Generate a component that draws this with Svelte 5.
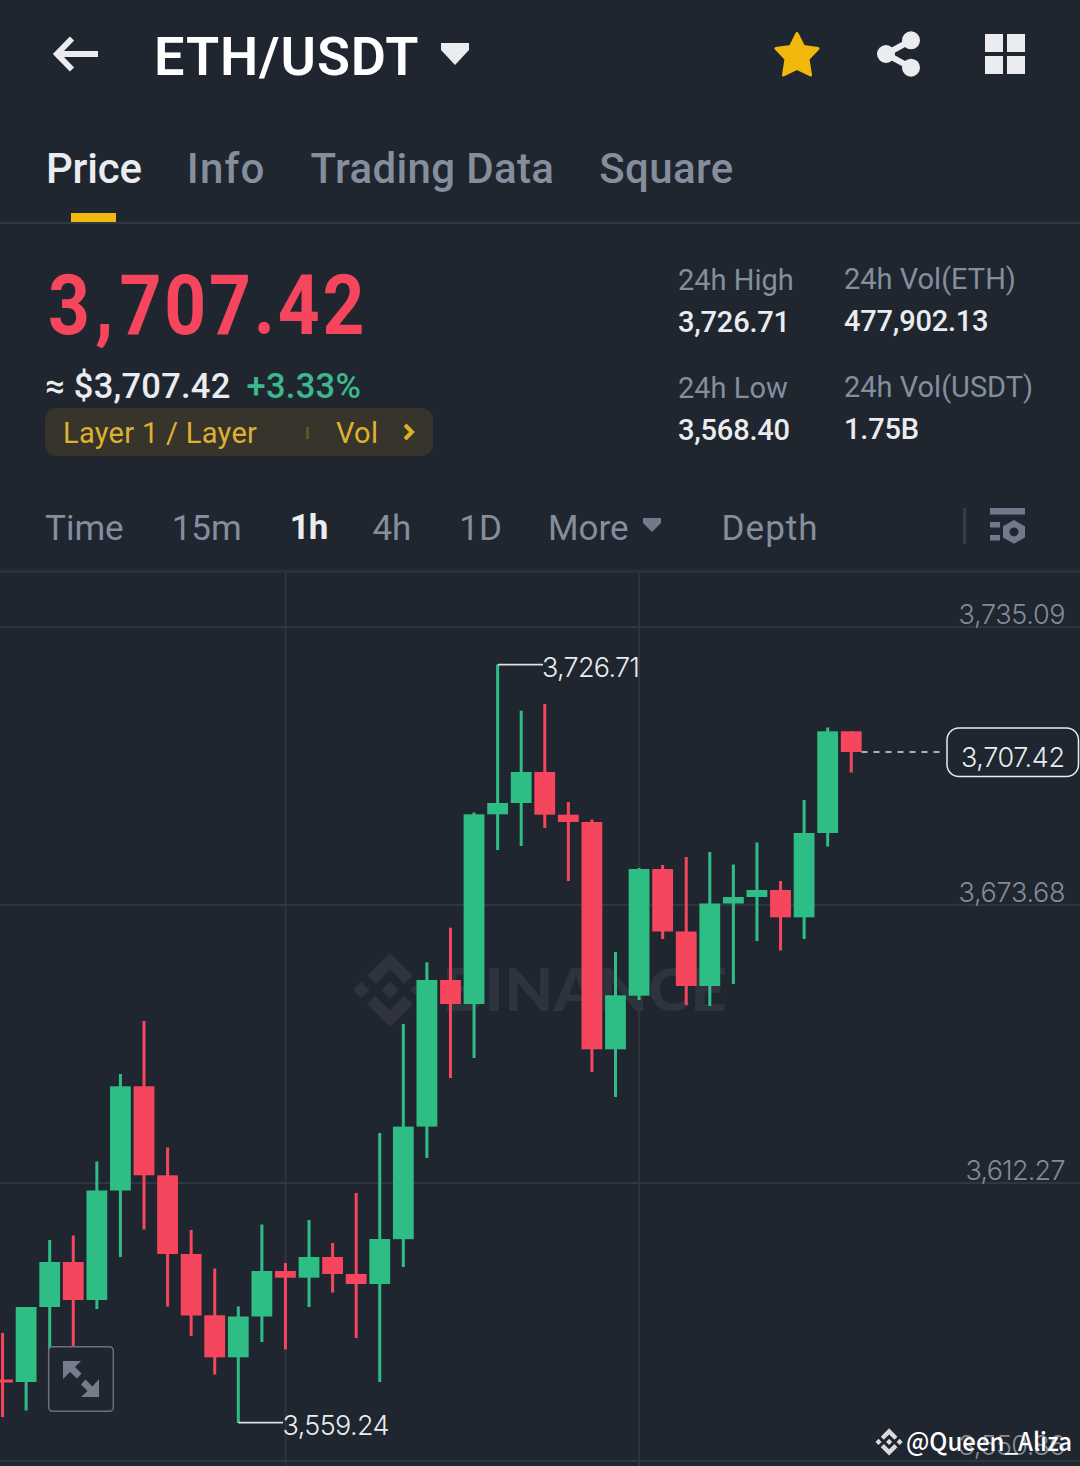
<script lang="ts">
	type Candle = [high: number, top: number, bottom: number, low: number, up: boolean];

	const tabs = ['Price', 'Info', 'Trading Data', 'Square'];
	const intervals = ['Time', '15m', '1h', '4h', '1D'];

	let activeTab = 'Price';
	let activeInterval = '1h';

	const stats = [
		{ label: '24h High', value: '3,726.71' },
		{ label: '24h Vol(ETH)', value: '477,902.13' },
		{ label: '24h Low', value: '3,568.40' },
		{ label: '24h Vol(USDT)', value: '1.75B' }
	];

	const axis = [
		{ label: '3,735.09', y: 627, base: 624, width: 107 },
		{ label: '3,673.68', y: 905, base: 902, width: 107 },
		{ label: '3,612.27', y: 1183, base: 1180, width: 100 },
		{ label: '3,550.86', y: 1461, base: 1455, width: 107 }
	];

	const step = 23.575;
	const bodyWidth = 20.8;

	const candles: Candle[] = [
		[1333, 1379.5, 1382.5, 1417, false],
		[1307, 1307, 1382, 1410.5, true],
		[1240, 1262, 1307, 1350, true],
		[1235.5, 1262, 1300, 1350, false],
		[1161.5, 1190.5, 1300, 1309, true],
		[1074, 1086.3, 1190.5, 1257, true],
		[1021, 1086.3, 1175.3, 1229.5, false],
		[1147.5, 1175.3, 1254, 1306.5, false],
		[1230, 1254, 1315.5, 1336, false],
		[1268.5, 1315.3, 1357.3, 1374.5, false],
		[1306.5, 1316.5, 1357.3, 1423, true],
		[1224.5, 1271, 1316.5, 1342, true],
		[1263, 1271, 1277.7, 1349.5, false],
		[1220, 1257, 1277.7, 1307, true],
		[1243, 1257, 1274, 1292.5, false],
		[1193, 1274, 1284, 1338, false],
		[1133, 1239, 1284, 1382, true],
		[1024, 1126.6, 1239.2, 1267, true],
		[962.3, 980, 1126.6, 1158, true],
		[927.7, 980, 1004, 1078, false],
		[812.5, 814.3, 1004, 1058, true],
		[664.5, 803, 814.3, 850, true],
		[710.7, 772, 803, 846, true],
		[704, 772, 814.7, 828, false],
		[802, 814.7, 822, 881, false],
		[819.5, 822, 1049.3, 1072, false],
		[952, 995.3, 1049.3, 1097, true],
		[868, 869, 995.7, 1000, true],
		[865, 869, 931.5, 939, false],
		[857, 931.5, 986, 1005, false],
		[852, 903.5, 986, 1006, true],
		[864.5, 897, 903.5, 984, true],
		[842.5, 890, 897, 941, true],
		[881, 890, 917.3, 950.5, false],
		[800, 833, 917.3, 939, true],
		[727.5, 731.3, 833, 846.5, true],
		[731.3, 731.3, 752, 772.5, false]
	];

	const logo =
		'M38.73 53.2 63.3 28.63 87.88 53.21 102.17 38.91 63.3 0 24.43 38.9zM0 63.31 14.3 49.01 28.59 63.3 14.29 77.6zM38.73 73.41 63.3 97.98 87.88 73.4 102.18 87.68 63.3 126.6 24.43 87.7zM98.02 63.31 112.31 49.02 126.61 63.3 112.31 77.61zM77.8 63.3 63.3 48.79 48.79 63.3 63.3 77.8z';
</script>

<main>
	<header>
		<svg class="back" width="46" height="36" viewBox="0 0 46 36">
			<path d="M20 2.5 5 18 20 33.500M5 18H46" fill="none" stroke="#eaecef" stroke-width="6" />
		</svg>
		<h1>ETH/USDT</h1>
		<svg class="caret" width="28" height="22" viewBox="0 0 28 22">
			<path d="M0 0H28V7L14 22 0 7z" fill="#eaecef" />
		</svg>
		<div class="actions">
			<svg width="46" height="46" viewBox="0 0 46 46">
				<path
					d="M23 2.500 29.500 15.500 44 17.500 34 28 36.500 44 23 37.500 9.500 44 12 28 2 17.500 16.500 15.500z"
					fill="#f0b90b"
					stroke="#f0b90b"
					stroke-width="3"
					stroke-linejoin="round"
				/>
			</svg>
			<svg width="44" height="46" viewBox="0 0 44 46">
				<path d="M34 9.300 9 23 34 36.700" fill="none" stroke="#eaecef" stroke-width="6" />
				<circle cx="34" cy="9.300" r="9" fill="#eaecef" />
				<circle cx="9" cy="23" r="9" fill="#eaecef" />
				<circle cx="34" cy="36.700" r="9" fill="#eaecef" />
			</svg>
			<svg width="40" height="40" viewBox="0 0 40 40">
				<path d="M0 0h18v18H0zM22 0h18v18H22zM0 22h18v18H0zM22 22h18v18H22z" fill="#eaecef" />
			</svg>
		</div>
	</header>

	<nav class="tabs">
		{#each tabs as tab}
			<button class:active={tab === activeTab} on:click={() => (activeTab = tab)}>{tab}</button>
		{/each}
	</nav>

	<section class="summary">
		<div class="quote">
			<strong>3<span>,</span>707.42</strong>
			<p>
				<span>≈ $3,707.42</span>
				<span class="change">+3.33%</span>
			</p>
			<div class="tag">
				<span class="layer">Layer 1 / Layer</span>
				<i></i>
				<span class="vol">Vol</span>
				<svg width="12" height="18" viewBox="0 0 12 18">
					<path d="M2 2 9 9 2 16" fill="none" stroke="#dfae22" stroke-width="4" />
				</svg>
			</div>
		</div>
		<dl>
			{#each stats as stat}
				<div>
					<dt>{stat.label}</dt>
					<dd>{stat.value}</dd>
				</div>
			{/each}
		</dl>
	</section>

	<nav class="intervals">
		{#each intervals as interval}
			<button
				class:active={interval === activeInterval}
				on:click={() => (activeInterval = interval)}>{interval}</button
			>
		{/each}
		<button class="more">
			More
			<svg width="18" height="14" viewBox="0 0 18 14">
				<path d="M0 0H18V5L9 14 0 5z" fill="#707a8a" />
			</svg>
		</button>
		<button class="depth">Depth</button>
		<i></i>
		<svg class="settings" width="36" height="37" viewBox="0 0 36 37">
			<path
				fill="#707a8a"
				fill-rule="evenodd"
				d="M0 0H35V6.500H0zM0 14H10V19.500H0zM0 27H10V32.500H0zM24 12 35 18.200V29.500L24 35.700 13 29.500V18.200zM24 19.400a4.500 4.500 0 1 0 0 9 4.500 4.500 0 1 0 0-9z"
			/>
		</svg>
	</nav>

	<svg class="chart" width="1080" height="893" viewBox="0 573 1080 893">
		<g class="grid">
			{#each axis as line}
				<path d="M0 {line.y}H1080" />
			{/each}
			<path d="M285.500 573V1466M639 573V1466" />
		</g>

		<g class="watermark">
			<path d={logo} transform="translate(353 953) scale(0.584)" />
			<text x="442" y="1010.500" textLength="285" lengthAdjust="spacingAndGlyphs">BINANCE</text>
		</g>

		{#each axis as line}
			<text class="price" x={1065.5 - line.width} y={line.base} textLength={line.width}
				>{line.label}</text
			>
		{/each}

		{#each candles as [high, top, bottom, low, up], i}
			<g class="candle" class:up>
				<rect x={2.55 + i * step - 1.5} y={high} width="3" height={low - high} />
				<rect
					x={2.55 + i * step - bodyWidth / 2}
					y={top}
					width={bodyWidth}
					height={bottom - top}
				/>
			</g>
		{/each}

		<g class="marker">
			<path d="M498 664.700H543M238.500 1422.700H283" />
			<text x="542" y="677" textLength="98">3,726.71</text>
			<text x="282.500" y="1435" textLength="107">3,559.24</text>
		</g>

		<g class="last">
			<path d="M861.500 752H941" stroke-dasharray="6 6" />
			<rect x="947" y="728" width="131.500" height="48.500" rx="12" />
			<text x="961" y="767.300" textLength="104">3,707.42</text>
		</g>

		<g class="expand">
			<rect x="48.700" y="1346.700" width="64.600" height="64.600" rx="4" />
			<path
				d="M63 1361H81L75 1367 81.500 1373.500 77 1378.500 70 1372 63 1379zM99 1397H81L87.500 1391 81 1384.500 85.500 1379.500 92.500 1386.500 99 1379z"
			/>
		</g>

		<g class="author">
			<path d={logo} transform="translate(875.500 1428.300) scale(0.215)" />
			<text x="906" y="1451" textLength="166" lengthAdjust="spacingAndGlyphs">@Queen_Aliza</text>
		</g>
	</svg>
</main>

<style>
	:global(body) {
		background: #1f2630;
	}
	main {
		width: 1080px;
		height: 1466px;
		overflow: hidden;
		background: #1f2630;
		color: #eaecef;
		font-family: Roboto, 'Liberation Sans', sans-serif;
	}
	header {
		display: flex;
		align-items: center;
		box-sizing: border-box;
		height: 108px;
		padding: 0 55px 0 52px;
	}
	h1 {
		margin: 5px 0 0 56px;
		color: #ffffff;
		font-size: 54px;
		font-weight: 600;
		line-height: 60px;
		letter-spacing: 0.9px;
	}
	.caret {
		margin-left: 22px;
	}
	.actions {
		display: flex;
		align-items: center;
		margin-left: auto;
	}
	.actions svg:nth-child(2) {
		margin: 0 64px 0 57px;
	}
	button {
		padding: 0;
		border: none;
		background: none;
		color: #848e9c;
		font: inherit;
		cursor: pointer;
		white-space: nowrap;
	}
	.tabs {
		display: flex;
		box-sizing: border-box;
		height: 116px;
		padding-left: 46px;
		gap: 45px;
		border-bottom: 2px solid #313843;
		font-size: 42px;
		font-weight: 500;
	}
	.tabs button {
		display: flex;
		flex-direction: column;
		align-items: center;
		justify-content: space-between;
		padding-top: 36px;
		line-height: 50px;
		letter-spacing: 0.35px;
	}
	.tabs button:nth-child(2) {
		letter-spacing: 1.2px;
	}
	.tabs .active {
		color: #eaecef;
		letter-spacing: -0.2px;
	}
	.tabs .active::after {
		content: '';
		width: 45px;
		height: 9px;
		background: #f0b90b;
	}
	.summary {
		display: flex;
		justify-content: space-between;
		box-sizing: border-box;
		height: 266px;
		padding: 37px 46px 0 45px;
	}
	strong {
		display: block;
		width: 370px;
		margin-left: 3px;
		color: #f6465d;
		font-size: 84px;
		font-weight: 700;
		line-height: 90px;
		letter-spacing: 3.2px;
		transform: scaleX(0.87);
		transform-origin: left;
	}
	strong span {
		margin: 0 4px 0 3px;
	}
	p {
		display: flex;
		margin: 13px 0 0;
		gap: 16px;
		font-size: 34.5px;
		font-weight: 500;
		line-height: 44px;
		letter-spacing: 0.25px;
		white-space: nowrap;
	}
	.change {
		color: #3cb88a;
	}
	.tag {
		display: flex;
		align-items: center;
		box-sizing: border-box;
		width: 388px;
		height: 48px;
		padding: 2px 18px 0;
		border-radius: 12px;
		background: #37342b;
		color: #dfb130;
		font-size: 29px;
		letter-spacing: 0.3px;
		white-space: nowrap;
	}
	.layer {
		width: 243px;
	}
	.tag i {
		width: 3px;
		height: 12px;
		background: #5f5029;
	}
	.vol {
		margin-left: 27px;
	}
	.tag svg {
		margin: -2px 0 0 auto;
	}
	dl {
		display: grid;
		grid-template-columns: 166px 190px;
		align-content: start;
		row-gap: 24px;
		margin: -2px 0 0;
		font-size: 29px;
		line-height: 42px;
		white-space: nowrap;
	}
	dl div:nth-child(even) {
		margin-top: -1px;
	}
	dt {
		color: #848e9c;
	}
	dd {
		margin: 0;
		font-weight: 500;
		letter-spacing: -0.2px;
	}
	.intervals {
		display: flex;
		align-items: center;
		box-sizing: border-box;
		height: 83px;
		padding: 0 54px 6px 45px;
		border-bottom: 3px solid #2a303c;
		font-size: 35px;
	}
	.intervals button {
		margin-right: 48px;
		padding-top: 2px;
	}
	.intervals .active {
		margin-right: 45px;
		padding-top: 0;
		color: #eaecef;
		font-weight: 700;
		letter-spacing: -1px;
	}
	.intervals .more {
		display: flex;
		align-items: center;
		gap: 14px;
		margin: 0 61px 0 -2px;
	}
	.more svg {
		margin-top: -6px;
	}
	.intervals .depth {
		letter-spacing: 1px;
	}
	.intervals i {
		width: 3px;
		height: 36px;
		margin: -3px 0 0 auto;
		background: #363c47;
	}
	.settings {
		margin: -2px 0 0 24px;
	}
	.chart {
		display: block;
		font-family: Inter, 'Liberation Sans', sans-serif;
		font-size: 27px;
		font-weight: 300;
	}
	.grid path {
		stroke: #303641;
		stroke-width: 1.8;
	}
	.watermark {
		fill: #2e333e;
		font-family: Lato, sans-serif;
		font-size: 59px;
		font-weight: 900;
	}
	.price {
		fill: #848b97;
	}
	.candle {
		fill: #f6465d;
	}
	.candle.up {
		fill: #2ebd85;
	}
	.marker,
	.last {
		fill: #eaecef;
	}
	.marker path,
	.last path {
		stroke: #dfe2e6;
		stroke-width: 1.7;
	}
	.last rect {
		fill: #1f2630;
		stroke: #eaecef;
		stroke-width: 1.5;
	}
	.expand {
		fill: #757d8c;
	}
	.expand rect {
		fill: #1f2630;
		stroke: #69707f;
		stroke-width: 1.5;
	}
	.author {
		fill: #ffffff;
		font-family: 'Noto Sans CJK SC', sans-serif;
		font-size: 25px;
		font-weight: 500;
	}
	.author path {
		fill: #d9dadc;
	}
</style>
